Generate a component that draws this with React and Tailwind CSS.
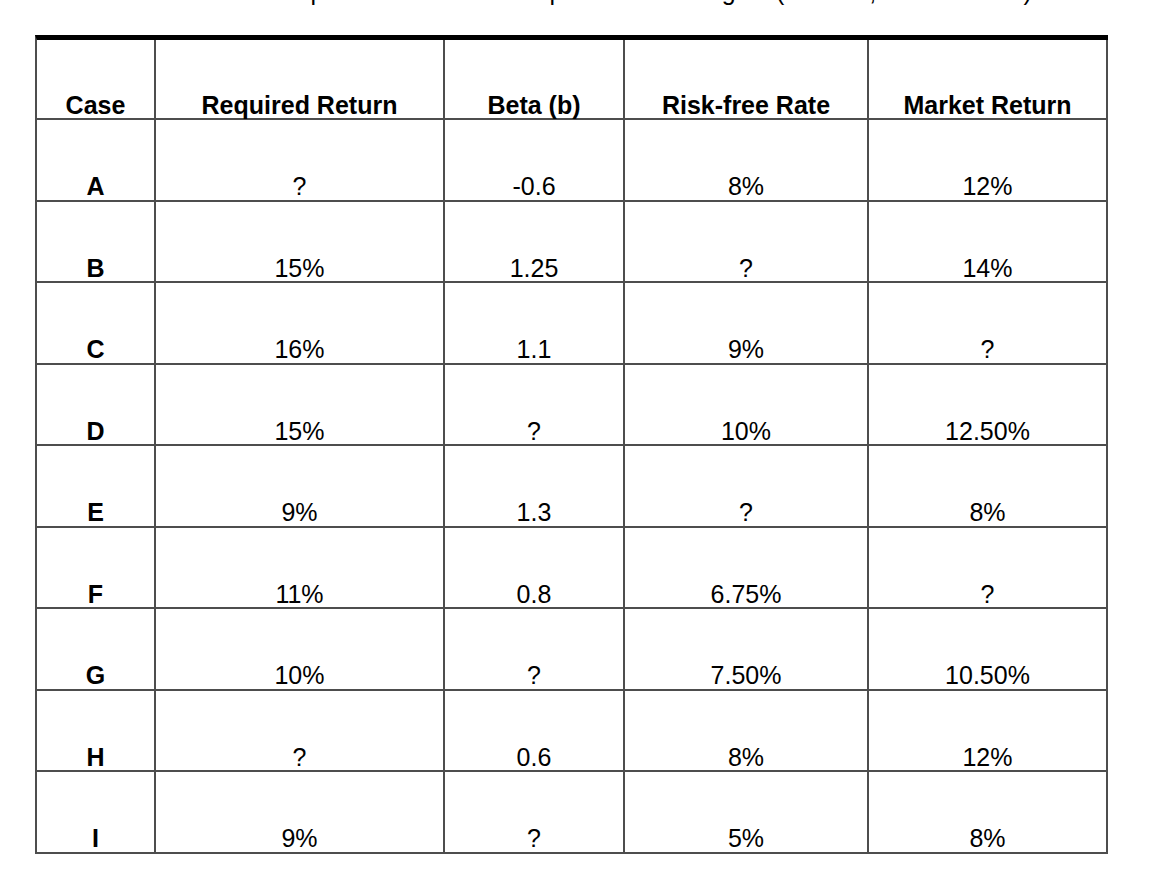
const headers = ['Case', 'Required Return', 'Beta (b)', 'Risk-free Rate', 'Market Return'];

const rows = [
  ['A', '?', '-0.6', '8%', '12%'],
  ['B', '15%', '1.25', '?', '14%'],
  ['C', '16%', '1.1', '9%', '?'],
  ['D', '15%', '?', '10%', '12.50%'],
  ['E', '9%', '1.3', '?', '8%'],
  ['F', '11%', '0.8', '6.75%', '?'],
  ['G', '10%', '?', '7.50%', '10.50%'],
  ['H', '?', '0.6', '8%', '12%'],
  ['I', '9%', '?', '5%', '8%'],
];

const cols = 'grid grid-cols-[119px_289px_180px_244px_239px]';

export default function App() {
  return (
    <div className="min-h-screen w-[1168px] h-[880px] bg-white text-black font-['Liberation_Sans',Arial,sans-serif] overflow-hidden">
      {/* caption line above the table, cut off by the top of the page */}
      <div className="h-[35px] overflow-hidden">
        <p className="mt-[-21px] pl-[52px] text-[25px] leading-none whitespace-nowrap">
          Find each blank to complete the table and explain its resulting so (concise, well founded).
        </p>
      </div>

      <div className="ml-[35px] w-[1073px] border-t-[5px] border-t-black border-l-2 border-l-[#4d4d4d]">
        <div className={cols}>
          {headers.map((h) => (
            <div
              key={h}
              className="h-[80px] flex items-end justify-center border-r-2 border-b-2 border-[#4d4d4d] text-[25px] leading-none font-bold"
            >
              {h}
            </div>
          ))}
        </div>

        {rows.map((row) => (
          <div key={row[0]} className={cols}>
            {row.map((cell, i) => (
              <div
                key={i}
                className={`h-[81.5px] flex items-end justify-center pb-[0.5px] border-r-2 border-b-2 border-[#4d4d4d] text-[25px] leading-none ${i === 0 ? 'font-bold' : ''}`}
              >
                {cell}
              </div>
            ))}
          </div>
        ))}
      </div>
    </div>
  );
}
